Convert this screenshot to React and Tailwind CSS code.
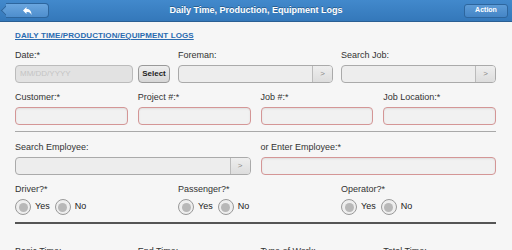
import React from "react";

function Label({ children }) {
  return <div className="text-[9px] leading-[11px] text-[#333] mb-[4px]">{children}</div>;
}

function TextInput({ invalid, className = "" }) {
  return (
    <div
      className={`h-[18px] rounded-[4px] border bg-[#f1f1f1] shadow-[inset_0_1px_2px_rgba(0,0,0,0.08)] ${
        invalid ? "border-[#d49696]" : "border-[#aaa]"
      } ${className}`}
    />
  );
}

function SearchInput({ className = "" }) {
  return (
    <div className={`h-[18px] rounded-[4px] border border-[#aaa] bg-[#ededed] flex overflow-hidden ${className}`}>
      <div className="flex-1" />
      <div className="w-[20px] border-l border-[#bbb] bg-gradient-to-b from-[#eee] to-[#ddd] flex items-center justify-center text-[8px] text-[#888]">
        &gt;
      </div>
    </div>
  );
}

function Radio({ label }) {
  return (
    <div className="flex items-center gap-[4px]">
      <div className="w-[16px] h-[16px] rounded-full border border-[#999] bg-[#eee] flex items-center justify-center">
        <div className="w-[9px] h-[9px] rounded-full bg-[#b8b8b8]" />
      </div>
      <span className="text-[9px] text-[#222]">{label}</span>
    </div>
  );
}

function YesNo({ label }) {
  return (
    <div>
      <Label>{label}</Label>
      <div className="flex items-center gap-[5px] mt-[4px]">
        <Radio label="Yes" />
        <Radio label="No" />
      </div>
    </div>
  );
}

export default function App() {
  return (
    <div className="w-[512px] h-[250px] overflow-hidden bg-[#f6f6f6] font-['Liberation_Sans',Arial,sans-serif]">
      {/* header */}
      <div className="h-[22px] bg-gradient-to-b from-[#4289cc] to-[#3478ba] border-b border-[#2a5f93] flex items-center justify-between px-[4px] relative">
        <div className="relative h-[15px] w-[43px] ml-[2px]">
          <div className="absolute left-[-3px] top-[2px] w-[11px] h-[11px] rotate-45 bg-[#5d9bd6] border-l border-b border-[#2d669e]" />
          <div className="absolute inset-0 rounded-r-[4px] bg-gradient-to-b from-[#6aa6df] to-[#4e8ecd] border border-l-0 border-[#2d669e] flex items-center justify-center">
            <svg width="9" height="8" viewBox="0 0 9 8">
              <path d="M0 3.5 L3.5 0 L3.5 2 C6.5 2 8.5 3.8 8.5 8 C7.5 5.5 6 5 3.5 5 L3.5 7 Z" fill="#fff" />
            </svg>
          </div>
        </div>
        <div className="absolute left-0 right-0 text-center text-white font-bold text-[9px] pointer-events-none [text-shadow:0_-1px_0_rgba(0,0,0,0.3)]">
          Daily Time, Production, Equipment Logs
        </div>
        <div className="h-[14px] w-[44px] rounded-[3px] border border-[#2d669e] bg-gradient-to-b from-[#5d9bd6] to-[#4485c6] text-white text-[7px] font-bold flex items-center justify-center">
          Action
        </div>
      </div>

      <div className="px-[15px] pr-[16px] pt-[8px]">
        <div className="text-[8px] font-bold text-[#2a6bb0] underline mb-[8px] tracking-[0.1px]">
          DAILY TIME/PRODUCTION/EQUIPMENT LOGS
        </div>

        <div className="grid grid-cols-[155px_155px_155px] gap-x-[8px]">
          <div>
            <Label>Date:*</Label>
            <div className="flex gap-[5px]">
              <div className="h-[18px] flex-1 rounded-[4px] border border-[#bbb] bg-[#e2e2e2] text-[8px] text-[#c4c4c4] flex items-center px-[4px]">
                MM/DD/YYYY
              </div>
              <div className="h-[18px] w-[32px] rounded-[4px] border border-[#999] bg-gradient-to-b from-[#eee] to-[#d6d6d6] text-[8px] font-bold text-[#222] flex items-center justify-center">
                Select
              </div>
            </div>
          </div>
          <div>
            <Label>Foreman:</Label>
            <SearchInput />
          </div>
          <div>
            <Label>Search Job:</Label>
            <SearchInput />
          </div>
        </div>

        <div className="grid grid-cols-4 gap-x-[10px] mt-[9px]">
          <div>
            <Label>Customer:*</Label>
            <TextInput invalid />
          </div>
          <div>
            <Label>Project #:*</Label>
            <TextInput invalid />
          </div>
          <div>
            <Label>Job #:*</Label>
            <TextInput invalid />
          </div>
          <div>
            <Label>Job Location:*</Label>
            <TextInput invalid />
          </div>
        </div>

        <div className="h-[1px] bg-[#a9a9a9] mt-[6px] mb-[10px]" />

        <div className="grid grid-cols-2 gap-x-[10px]">
          <div>
            <Label>Search Employee:</Label>
            <SearchInput />
          </div>
          <div>
            <Label>or Enter Employee:*</Label>
            <TextInput invalid />
          </div>
        </div>

        <div className="grid grid-cols-[155px_155px_155px] gap-x-[8px] mt-[9px]">
          <YesNo label="Driver?*" />
          <YesNo label="Passenger?*" />
          <YesNo label="Operator?*" />
        </div>

        <div className="h-[2px] bg-[#555] mt-[7px] mb-[22px]" />

        <div className="grid grid-cols-4 gap-x-[10px]">
          <Label>Basic Time:</Label>
          <Label>End Time:</Label>
          <Label>Type of Work:</Label>
          <Label>Total Time:</Label>
        </div>
      </div>
    </div>
  );
}
